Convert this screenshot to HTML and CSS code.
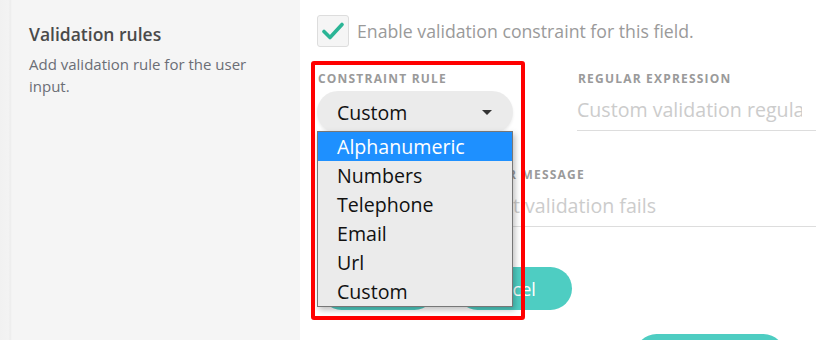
FILE: index.html
```html
<!DOCTYPE html>
<html lang="en">
<head>
  <meta charset="UTF-8">
  <title>Validation rules</title>
  <link rel="stylesheet" href="styles.css">
</head>
<body>

  <div class="page">
    <div class="side">
      <h2>Validation rules</h2>
      <p>Add validation rule for the user input.</p>
    </div>

    <div class="main">
      <label class="check-row">
        <span class="checkbox">
          <svg width="22" height="18" viewBox="0 0 22 18">
            <path d="M2 9.5 L8 15.5 L20 2.5" fill="none" stroke="#2bb596" stroke-width="3.6" stroke-linecap="round" stroke-linejoin="round"/>
          </svg>
        </span>
        <span class="check-text">Enable validation constraint for this field.</span>
      </label>

      <div class="fields">
        <div class="field">
          <div class="field-label">Constraint rule</div>
          <div class="select-wrap">
            <div class="select">
              <span>Custom</span>
              <span class="arrow"></span>
            </div>
            <!-- open dropdown list -->
            <ul class="options">
              <li class="active">Alphanumeric</li>
              <li>Numbers</li>
              <li>Telephone</li>
              <li>Email</li>
              <li>Url</li>
              <li>Custom</li>
            </ul>
          </div>
        </div>
        <div class="field">
          <div class="field-label">Regular expression</div>
          <input class="text-input" type="text" placeholder="Custom validation regular expression">
        </div>
        <div class="field wide">
          <div class="field-label">Custom validation error message</div>
          <input class="text-input" type="text" placeholder="Errors to show if input validation fails">
        </div>
      </div>

      <div class="actions">
        <button class="btn">Save</button>
        <button class="btn">Cancel</button>
      </div>

      <div class="footer">
        <button class="btn btn-wide">Save settings</button>
      </div>
    </div>
  </div>

  <div class="highlight"></div>

</body>
</html>
```

FILE: styles.css
```css
body {
  margin: 0;
  font-family: "Open Sans", "Noto Sans", sans-serif;
  width: 828px;
  height: 340px;
  overflow: hidden;
  position: relative;
  background: #fff;
}
.page {
  display: grid;
  grid-template-columns: 300px 1fr;
  height: 340px;
}
.side {
  background: linear-gradient(to right, #f1f1f1 0, #f3f3f3 9px, #ececec 10px, #f5f5f5 12px);
  padding: 22px 29px;
}
.side h2 {
  margin: 0 0 7px;
  font-size: 17.5px;
  font-weight: 600;
  color: #4a4a4a;
}
.side p {
  margin: 0;
  font-size: 15px;
  line-height: 22px;
  color: #6b6e75;
}
.main {
  padding: 15px 12px 0 17px;
}
.check-row {
  display: flex;
  align-items: center;
  gap: 8px;
}
.checkbox {
  width: 30px;
  height: 30px;
  border: 1px solid #ddd;
  border-radius: 3px;
  background: #f5f5f5;
  display: flex;
  align-items: center;
  justify-content: center;
}
.check-text {
  font-size: 17.7px;
  color: #9a9a9a;
}
.fields {
  display: grid;
  grid-template-columns: 196px 1fr;
  column-gap: 64px;
  row-gap: 31px;
  margin-top: 21px;
}
.field.wide {
  grid-column: 1 / 3;
}
.field-label {
  font-size: 12px;
  font-weight: 700;
  letter-spacing: 1.2px;
  text-transform: uppercase;
  color: #9a9a9a;
  padding: 1px 0 0 1px;
  height: 20px;
  line-height: 20px;
}
.select-wrap {
  position: relative;
  margin-top: 2px;
}
.select {
  height: 42px;
  border-radius: 21px;
  background: #ebebeb;
  box-shadow: 0 2px 3px rgba(0,0,0,0.08);
  display: flex;
  align-items: center;
  justify-content: space-between;
  padding: 0 20px;
  font-size: 19.5px;
  color: #111;
}
.arrow {
  width: 0;
  height: 0;
  border-left: 5px solid transparent;
  border-right: 5px solid transparent;
  border-top: 5px solid #333;
  margin-right: 1px;
}
.options {
  position: absolute;
  top: 40px;
  left: 0;
  width: 194px;
  margin: 0;
  padding: 0;
  list-style: none;
  background: #ebebeb;
  border: 1px solid #777;
  box-shadow: 2px 3px 6px rgba(0,0,0,0.25);
  z-index: 10;
}
.options li {
  height: 29px;
  line-height: 29px;
  padding-left: 19px;
  font-size: 19.6px;
  color: #111;
}
.options li.active {
  background: #1e90ff;
  color: #fff;
}
.text-input {
  display: block;
  width: 100%;
  box-sizing: border-box;
  margin-top: 0;
  height: 42px;
  border: none;
  border-bottom: 1px solid #ddd;
  padding: 0 14px 0 0;
  font-family: inherit;
  font-size: 19.6px;
  outline: none;
  background: transparent;
}
.text-input::placeholder {
  color: #ccc;
}
.actions {
  display: flex;
  gap: 20px;
  margin-top: 40px;
  padding-left: 3px;
}
.btn {
  height: 43px;
  width: 116px;
  border: none;
  border-radius: 22px;
  background: #4ecdc2;
  color: #fff;
  font-family: inherit;
  font-size: 18px;
  padding: 0 12px 0 0;
  cursor: pointer;
}
.footer {
  display: flex;
  justify-content: flex-end;
  margin-top: 24px;
  padding-right: 31px;
}
.btn-wide {
  width: 150px;
}
.highlight {
  position: absolute;
  left: 311px;
  top: 61px;
  width: 206px;
  height: 251px;
  border: 4px solid #ff0000;
  border-radius: 3px;
  pointer-events: none;
  z-index: 20;
}
```
